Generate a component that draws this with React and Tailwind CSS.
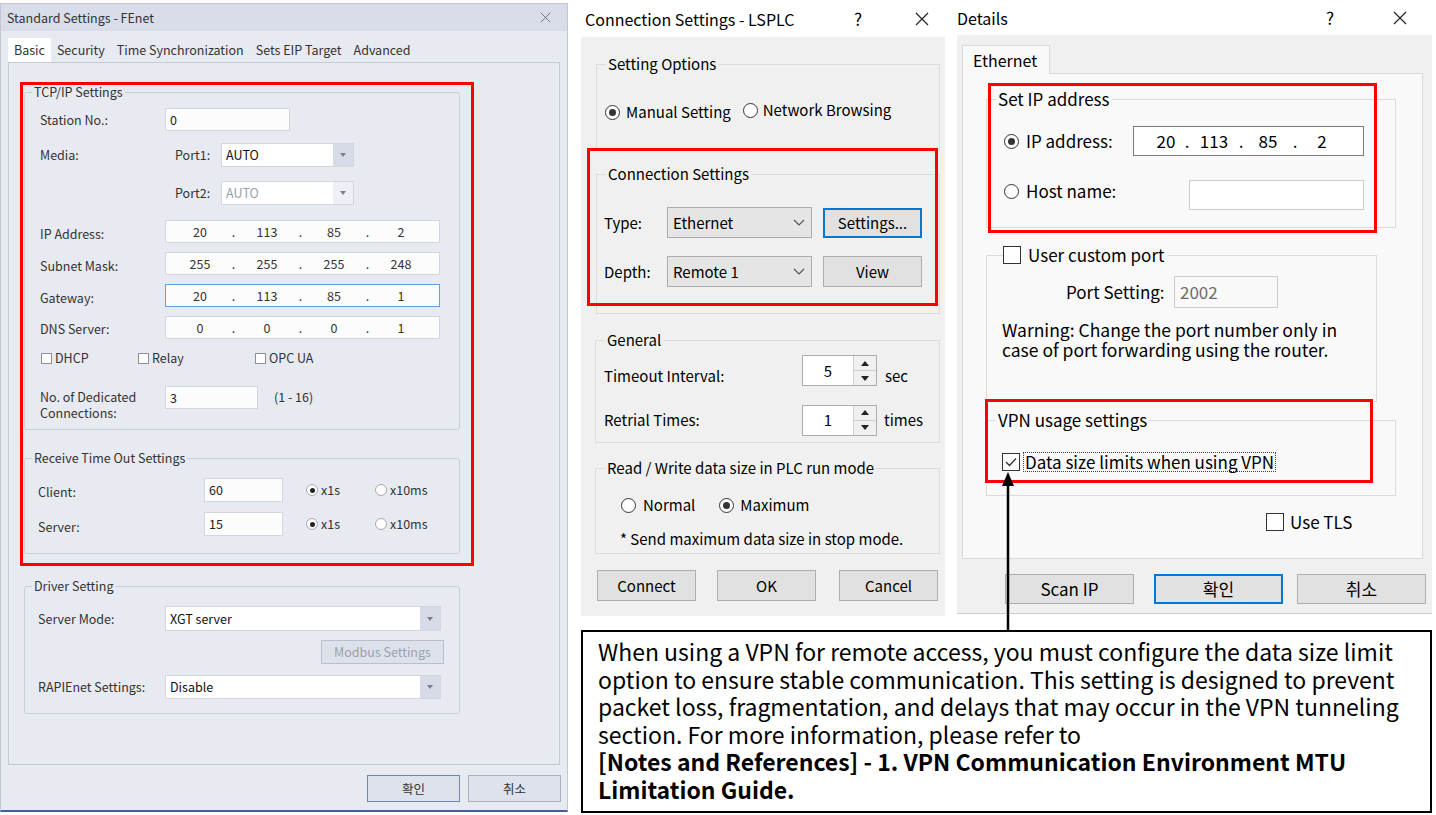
import React from 'react';

function CloseIcon({ size = 14, color = '#222', stroke = 1.2 }) {
  return (
    <svg width={size} height={size} viewBox="0 0 14 14">
      <path d="M1 1L13 13M13 1L1 13" stroke={color} strokeWidth={stroke} fill="none" />
    </svg>
  );
}

/* ---------- left window (FEnet) ---------- */

function LGroup({ title, className, children }) {
  return (
    <fieldset className={`border border-[#c9cdd8] rounded-[3px] ${className}`}>
      <legend className="ml-[7px] px-[2px] leading-[18px] text-[#333]">{title}</legend>
      {children}
    </fieldset>
  );
}

function LInput({ w, value }) {
  return (
    <div className={`flex items-center h-[23px] pl-[4px] bg-[#fcfcfd] border border-[#d3d6de] text-[#222] ${w}`}>
      {value}
    </div>
  );
}

function LIp({ parts, focus }) {
  return (
    <div
      className={`flex items-center h-[23px] w-[275px] pl-[4px] bg-[#fcfcfd] border text-[#333] ${
        focus ? 'border-[#6a9fd4]' : 'border-[#d3d6de]'
      }`}
    >
      {parts.map((p, i) => (
        <React.Fragment key={i}>
          {i > 0 && <span className="w-[7px] text-center">.</span>}
          <span className="w-[60px] text-center">{p}</span>
        </React.Fragment>
      ))}
    </div>
  );
}

function LSelect({ w, value, disabled }) {
  return (
    <div className={`flex h-[24px] bg-white border border-[#d3d6de] ${w}`}>
      <span className={`flex-1 flex items-center pl-[4px] ${disabled ? 'text-[#9aa0aa]' : 'text-[#111]'}`}>{value}</span>
      <span className={`w-[20px] flex items-center justify-center ${disabled ? 'bg-[#eef0f5]' : 'bg-[#d6dbe7]'}`}>
        <svg width="6" height="4" viewBox="0 0 6 4">
          <path d="M0 0H6L3 4Z" fill="#7a808c" />
        </svg>
      </span>
    </div>
  );
}

function LCheck({ label, className }) {
  return (
    <div className={`flex items-center ${className}`}>
      <span className="w-[11px] h-[11px] border border-[#8b909c] bg-white" />
      <span className="ml-[3px] text-[#333]">{label}</span>
    </div>
  );
}

function LRadio({ label, checked, className }) {
  return (
    <div className={`flex items-center ${className}`}>
      <span className="w-[12px] h-[12px] rounded-full border border-[#a3a8b3] bg-white flex items-center justify-center">
        {checked && <span className="w-[5px] h-[5px] rounded-full bg-[#222]" />}
      </span>
      <span className="ml-[3px] text-[#333]">{label}</span>
    </div>
  );
}

function LeftWindow() {
  const lbl = 'ml-[15px] w-[125px] shrink-0 text-[#333]';
  return (
    <div className="relative mt-[3px] w-[568px] h-[809px] shrink-0 flex flex-col bg-[#e8eaf2] border border-[#c2c7d3] border-b-2 border-b-[#3f6196] text-[12.5px] leading-[16px]">
      <div className="h-[27px] bg-[#d8dde9] flex items-center pl-[6px] pr-[16px] text-[#333]">
        <span>Standard Settings - FEnet</span>
        <span className="ml-auto">
          <CloseIcon size={11} color="#666" stroke={1.1} />
        </span>
      </div>

      <div className="flex ml-[7px] mt-[7px] h-[24px] text-[#333]">
        <span className="px-[6px] flex items-center bg-white">Basic</span>
        <span className="px-[6px] flex items-center">Security</span>
        <span className="px-[6px] flex items-center">Time Synchronization</span>
        <span className="px-[6px] flex items-center">Sets EIP Target</span>
        <span className="px-[6px] flex items-center">Advanced</span>
      </div>

      <div className="mx-[7px] h-[703px] border border-[#c6cad5] flex flex-col">
        <LGroup title="TCP/IP Settings" className="ml-[15px] mt-[20px] w-[436px] pb-[9px]">
          <div className="flex items-center h-[23px] mt-[7px]">
            <span className={lbl}>Station No.:</span>
            <LInput w="w-[125px]" value="0" />
          </div>
          <div className="flex items-center h-[24px] mt-[12px]">
            <span className={lbl}>Media:</span>
            <span className="ml-[10px] w-[46px] text-[#333]">Port1:</span>
            <LSelect w="w-[133px]" value="AUTO" />
          </div>
          <div className="flex items-center h-[24px] mt-[14px]">
            <span className={lbl} />
            <span className="ml-[10px] w-[46px] text-[#333]">Port2:</span>
            <LSelect w="w-[133px]" value="AUTO" disabled />
          </div>
          <div className="flex items-center h-[23px] mt-[15px]">
            <span className={`${lbl} pt-[4px]`}>IP Address:</span>
            <LIp parts={['20', '113', '85', '2']} />
          </div>
          <div className="flex items-center h-[23px] mt-[9px]">
            <span className={`${lbl} pt-[4px]`}>Subnet Mask:</span>
            <LIp parts={['255', '255', '255', '248']} />
          </div>
          <div className="flex items-center h-[23px] mt-[9px]">
            <span className={`${lbl} pt-[4px]`}>Gateway:</span>
            <LIp parts={['20', '113', '85', '1']} focus />
          </div>
          <div className="flex items-center h-[23px] mt-[9px]">
            <span className={`${lbl} pt-[2px]`}>DNS Server:</span>
            <LIp parts={['0', '0', '0', '1']} />
          </div>
          <div className="flex items-center h-[16px] mt-[11px] ml-[16px]">
            <LCheck label="DHCP" className="w-[97px]" />
            <LCheck label="Relay" className="w-[117px]" />
            <LCheck label="OPC UA" />
          </div>
          <div className="flex items-start h-[34px] mt-[20px]">
            <span className={`${lbl} mt-[3px]`}>
              No. of Dedicated
              <br />
              Connections:
            </span>
            <LInput w="w-[93px]" value="3" />
            <span className="ml-[16px] mt-[3px] text-[#333]">(1 - 16)</span>
          </div>
        </LGroup>

        <LGroup title="Receive Time Out Settings" className="ml-[15px] mt-[19px] w-[436px] pb-[17px]">
          <div className="flex items-center h-[24px] mt-[11px]">
            <span className="ml-[13px] w-[166px] pt-[3px] text-[#333]">Client:</span>
            <LInput w="w-[79px] h-[24px]" value="60" />
            <LRadio label="x1s" checked className="ml-[23px] w-[69px]" />
            <LRadio label="x10ms" />
          </div>
          <div className="flex items-center h-[24px] mt-[10px]">
            <span className="ml-[13px] w-[166px] pt-[5px] text-[#333]">Server:</span>
            <LInput w="w-[79px] h-[24px]" value="15" />
            <LRadio label="x1s" checked className="ml-[23px] w-[69px]" />
            <LRadio label="x10ms" />
          </div>
        </LGroup>

        <LGroup title="Driver Setting" className="ml-[15px] mt-[23px] w-[436px] pb-[14px]">
          <div className="flex items-center h-[25px] mt-[11px]">
            <span className="ml-[13px] w-[127px] text-[#333]">Server Mode:</span>
            <LSelect w="w-[276px] h-[25px]" value="XGT server" />
          </div>
          <div className="flex h-[24px] mt-[9px]">
            <span className="ml-[296px] w-[123px] flex items-center justify-center bg-[#dde1ea] border border-[#b9bfcc] text-[#9ba1ad]">
              Modbus Settings
            </span>
          </div>
          <div className="flex items-center h-[24px] mt-[11px]">
            <span className="ml-[13px] w-[127px] text-[#333]">RAPIEnet Settings:</span>
            <LSelect w="w-[276px]" value="Disable" />
          </div>
        </LGroup>
      </div>

      <div className="flex justify-end gap-[8px] mt-[10px] pr-[6px]">
        <span className="w-[93px] h-[27px] flex items-center justify-center bg-[#dde2ec] border border-[#6f88b3] text-[#333]">확인</span>
        <span className="w-[93px] h-[27px] flex items-center justify-center bg-[#dde2ec] border border-[#a9b0be] text-[#333]">취소</span>
      </div>

      <div className="absolute left-[19px] top-[78px] w-[454px] h-[484px] border-[3px] border-[#ff0000]" />
    </div>
  );
}

/* ---------- windows 10 style controls ---------- */

function WGroup({ title, className, children }) {
  return (
    <fieldset className={`border border-[#dcdcdc] ${className}`}>
      <legend className="ml-[9px] px-[2px] leading-[22px]">{title}</legend>
      {children}
    </fieldset>
  );
}

function WRadio({ checked }) {
  return (
    <span className="w-[15px] h-[15px] shrink-0 rounded-full border border-[#333] bg-white flex items-center justify-center">
      {checked && <span className="w-[7px] h-[7px] rounded-full bg-[#333]" />}
    </span>
  );
}

function WCheck({ checked }) {
  return (
    <span className="w-[18px] h-[18px] shrink-0 border border-[#333] bg-white flex items-center justify-center">
      {checked && (
        <svg width="12" height="10" viewBox="0 0 12 10">
          <path d="M1 5L4.5 8.5L11 1.5" stroke="#333" strokeWidth="1.3" fill="none" />
        </svg>
      )}
    </span>
  );
}

function WSelect({ value }) {
  return (
    <div className="w-[145px] h-[31px] flex items-center pl-[5px] pr-[6px] bg-[#e5e5e5] border border-[#adadad]">
      <span>{value}</span>
      <svg className="ml-auto" width="12" height="7" viewBox="0 0 12 7">
        <path d="M1 1L6 6L11 1" stroke="#555" strokeWidth="1.2" fill="none" />
      </svg>
    </div>
  );
}

function WButton({ children, className, focus }) {
  return (
    <span
      className={`flex items-center justify-center bg-[#e1e1e1] ${
        focus ? 'border-2 border-[#0078d7]' : 'border border-[#adadad]'
      } ${className}`}
    >
      {children}
    </span>
  );
}

function Spin({ value }) {
  return (
    <div className="flex w-[75px] h-[31px] border border-[#adadad] bg-white">
      <span className="w-[50px] flex items-center justify-center">{value}</span>
      <div className="w-[23px] flex flex-col border-l border-[#cfcfcf]">
        <span className="flex-1 flex items-center justify-center bg-[#f0f0f0] border-b border-[#cfcfcf]">
          <svg width="8" height="5" viewBox="0 0 8 5">
            <path d="M0 5L4 0L8 5Z" fill="#222" />
          </svg>
        </span>
        <span className="flex-1 flex items-center justify-center bg-[#f0f0f0]">
          <svg width="8" height="5" viewBox="0 0 8 5">
            <path d="M0 0L4 5L8 0Z" fill="#222" />
          </svg>
        </span>
      </div>
    </div>
  );
}

function ConnectionWindow() {
  return (
    <div className="relative w-[364px] h-[616px] shrink-0 flex flex-col text-[15px] leading-[20px] text-black">
      <div className="h-[37px] flex items-center pl-[4px] pr-[16px] bg-white">
        <span className="text-[16px]">Connection Settings - LSPLC</span>
        <span className="ml-auto mr-[53px] text-[17px]">?</span>
        <CloseIcon size={14} color="#222" />
      </div>
      <div className="flex-1 bg-[#f0f0f0] flex flex-col">
        <WGroup title="Setting Options" className="ml-[15px] mt-[16px] w-[344px] h-[97px]">
          <div className="flex items-center h-[20px] mt-[27px] ml-[8px]">
            <WRadio checked />
            <span className="ml-[6px]">Manual Setting</span>
            <span className="ml-[12px] -mt-[4px] flex items-center">
              <WRadio />
              <span className="ml-[5px]">Network Browsing</span>
            </span>
          </div>
        </WGroup>

        <WGroup title="Connection Settings" className="ml-[15px] mt-[13px] w-[344px] h-[151px]">
          <div className="flex items-center h-[31px] mt-[22px] ml-[7px]">
            <span className="w-[63px]">Type:</span>
            <WSelect value="Ethernet" />
            <WButton focus className="ml-[11px] w-[99px] h-[30px]">
              Settings...
            </WButton>
          </div>
          <div className="flex items-center h-[31px] mt-[18px] ml-[7px]">
            <span className="w-[63px]">Depth:</span>
            <WSelect value="Remote 1" />
            <WButton className="ml-[11px] w-[99px] h-[31px]">View</WButton>
          </div>
        </WGroup>

        <WGroup title="General" className="ml-[14px] mt-[15px] w-[345px] h-[114px]">
          <div className="flex items-center h-[31px] mt-[4px] ml-[8px]">
            <span className="w-[198px] mt-[10px]">Timeout Interval:</span>
            <Spin value="5" />
            <span className="ml-[8px] mt-[10px]">sec</span>
          </div>
          <div className="flex items-center h-[32px] mt-[18px] ml-[8px]">
            <span className="w-[198px]">Retrial Times:</span>
            <Spin value="1" />
            <span className="ml-[7px]">times</span>
          </div>
        </WGroup>

        <WGroup title="Read / Write data size in PLC run mode" className="ml-[14px] mt-[14px] w-[345px] h-[97px]">
          <div className="flex items-center h-[20px] mt-[16px] ml-[25px]">
            <WRadio />
            <span className="ml-[7px]">Normal</span>
            <span className="ml-[24px]">
              <WRadio checked />
            </span>
            <span className="ml-[6px]">Maximum</span>
          </div>
          <div className="h-[20px] mt-[14px] ml-[24px]">* Send maximum data size in stop mode.</div>
        </WGroup>

        <div className="flex mt-[16px] ml-[16px] h-[31px]">
          <WButton className="w-[99px]">Connect</WButton>
          <WButton className="ml-[21px] w-[99px]">OK</WButton>
          <WButton className="ml-[23px] w-[99px]">Cancel</WButton>
        </div>
      </div>

      <div className="absolute left-[6px] top-[148px] w-[351px] h-[158px] border-[3px] border-[#ff0000]" />
    </div>
  );
}

function DetailsWindow() {
  return (
    <div className="relative ml-[12px] w-[475px] h-[616px] shrink-0 flex flex-col text-[17px] leading-[20px] text-black">
      <div className="h-[35px] flex items-center pr-[25px] bg-white text-[16px]">
        <span>Details</span>
        <span className="ml-auto mr-[59px] text-[17px]">?</span>
        <CloseIcon size={14} color="#222" />
      </div>
      <div className="h-[579px] bg-[#f0f0f0] border-b border-[#cccccc] flex flex-col">
        <div className="relative z-10 ml-[5px] mt-[10px] -mb-px w-[88px] h-[29px] flex items-center pl-[10px] bg-[#f9f9f9] border border-b-0 border-[#dadada] text-[16px]">
          Ethernet
        </div>
        <div className="ml-[5px] w-[461px] h-[486px] bg-[#f9f9f9] border border-[#dadada] flex flex-col">
          <WGroup title="Set IP address" className="ml-[23px] mt-[14px] w-[410px] h-[140px]">
            <div className="flex items-center h-[30px] mt-[16px] ml-[17px]">
              <span className="w-[129px] flex items-center">
                <WRadio checked />
                <span className="ml-[7px]">IP address:</span>
              </span>
              <div className="w-[231px] h-[30px] flex items-center bg-white border border-[#7a7a7a] pl-[18px]">
                <span className="w-[28px] text-center">20</span>
                <span className="w-[14px] text-center">.</span>
                <span className="w-[40px] text-center">113</span>
                <span className="w-[14px] text-center">.</span>
                <span className="w-[40px] text-center">85</span>
                <span className="w-[14px] text-center">.</span>
                <span className="w-[40px] text-center">2</span>
              </div>
            </div>
            <div className="flex items-center h-[30px] mt-[24px] ml-[17px]">
              <span className="w-[185px] mb-[8px] flex items-center">
                <WRadio />
                <span className="ml-[7px]">Host name:</span>
              </span>
              <div className="w-[175px] h-[30px] bg-white border border-[#cccccc]" />
            </div>
          </WGroup>

          <fieldset className="ml-[23px] mt-[16px] w-[391px] h-[158px] border border-[#dcdcdc]">
            <legend className="ml-[16px] pr-[4px] leading-[22px]">
              <span className="flex items-center">
                <WCheck />
                <span className="ml-[7px]">User custom port</span>
              </span>
            </legend>
            <div className="flex items-center h-[32px] mt-[10px] ml-[79px]">
              <span className="w-[108px]">Port Setting:</span>
              <div className="w-[104px] h-[32px] flex items-center pl-[5px] bg-[#f9f9f9] border border-[#cccccc] text-[#6d6d6d]">
                2002
              </div>
            </div>
            <div className="mt-[12px] ml-[15px] leading-[20px] text-[17.5px]">
              Warning: Change the port number only in
              <br />
              case of port forwarding using the router.
            </div>
          </fieldset>

          <WGroup title="VPN usage settings" className="ml-[23px] mt-[7px] w-[410px] h-[87px]">
            <div className="flex items-center h-[20px] mt-[21px] ml-[15px]">
              <WCheck checked />
              <span className="ml-[3px] px-[1px] border border-dotted border-[#444] leading-[18px]">
                Data size limits when using VPN
              </span>
            </div>
          </WGroup>

          <div className="flex items-center h-[20px] mt-[16px] ml-[303px]">
            <WCheck />
            <span className="ml-[6px]">Use TLS</span>
          </div>
        </div>

        <div className="flex mt-[15px] ml-[48px] h-[30px]">
          <WButton className="w-[129px]">Scan IP</WButton>
          <WButton focus className="ml-[20px] w-[129px]">
            확인
          </WButton>
          <WButton className="ml-[14px] w-[129px]">취소</WButton>
        </div>
      </div>

      <div className="absolute left-[31px] top-[83px] w-[389px] h-[150px] border-[3px] border-[#ff0000]" />
      <div className="absolute left-[28px] top-[399px] w-[388px] h-[84px] border-[3px] border-[#ff0000]" />
    </div>
  );
}

export default function App() {
  return (
    <div className="w-[1436px] h-[815px] bg-white flex items-start overflow-hidden font-['Noto_Sans_CJK_KR','Noto_Sans',sans-serif]">
      <LeftWindow />

      <div className="relative ml-[13px] w-[851px] flex flex-col">
        <div className="flex items-start">
          <ConnectionWindow />
          <DetailsWindow />
        </div>

        <div className="mt-[14px] h-[183px] border-2 border-black bg-white pl-[15px] pt-[6px] text-[23px] leading-[27.6px] text-black whitespace-nowrap">
          When using a VPN for remote access, you must configure the data size limit
          <br />
          option to ensure stable communication. This setting is designed to prevent
          <br />
          packet loss, fragmentation, and delays that may occur in the VPN tunneling
          <br />
          section. For more information, please refer to
          <div className="font-bold">
            [Notes and References] - 1. VPN Communication Environment MTU
            <br />
            Limitation Guide.
          </div>
        </div>

        <svg className="absolute left-[420px] top-[472px]" width="14" height="158" viewBox="0 0 14 158">
          <path d="M7 0L1 14H13Z" fill="#000" />
          <path d="M7 12V158" stroke="#000" strokeWidth="2.5" />
        </svg>
      </div>
    </div>
  );
}
